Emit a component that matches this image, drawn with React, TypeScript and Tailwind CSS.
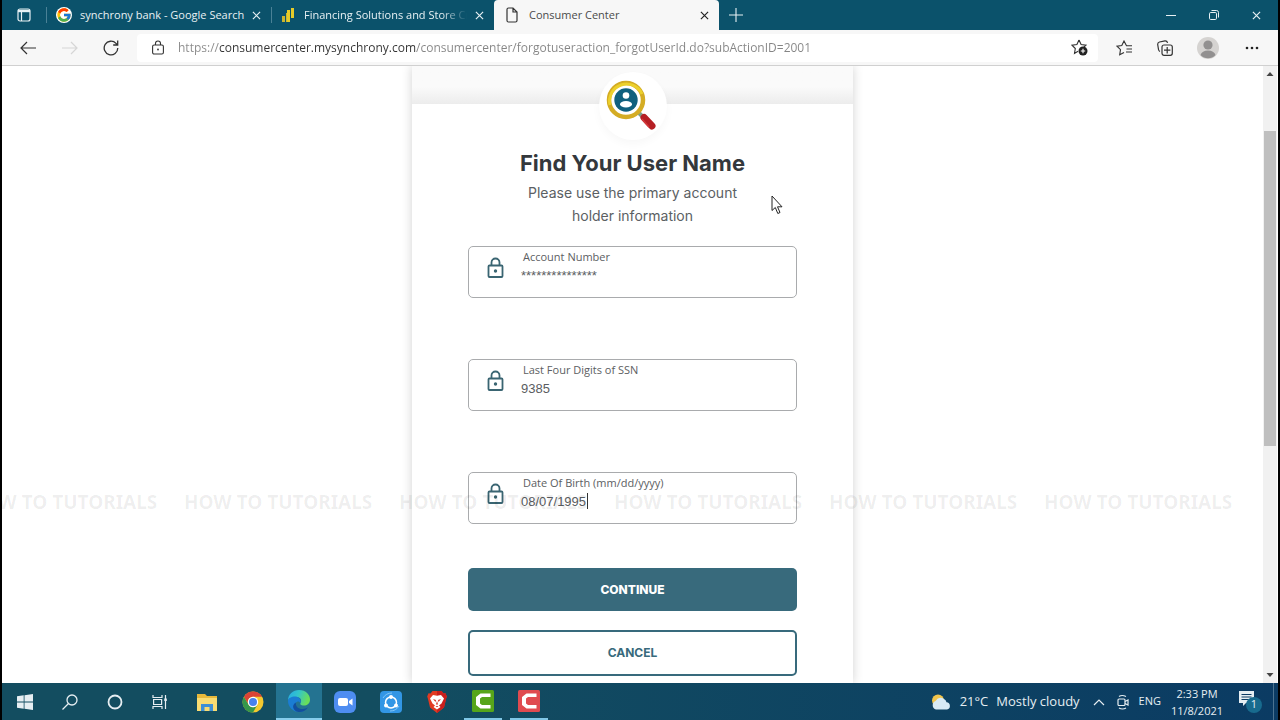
import React, { useState } from 'react';
import { FcGoogle } from 'react-icons/fc';

interface TextFieldProps {
  id: string;
  label: string;
  value: string;
  onChange: (value: string) => void;
  caret?: boolean;
}

function CloseIcon({ className = '' }: { className?: string }) {
  return (
    <svg viewBox="0 0 10 10" className={`size-[9px] ${className}`} fill="none" stroke="currentColor" strokeWidth="1.3">
      <path d="M1 1l8 8M9 1L1 9" />
    </svg>
  );
}

function LockIcon() {
  return (
    <svg viewBox="0 0 18 22" className="w-[18px] h-[22px] text-[#3a6572]" fill="none" stroke="currentColor" strokeWidth="1.8">
      <rect x="1.5" y="8.5" width="14" height="11.5" rx="1" />
      <path d="M4.500 8.500V5.500a4 4 0 0 1 8 0V8.500" />
      <circle cx="8.500" cy="14" r="1.700" fill="currentColor" stroke="none" />
    </svg>
  );
}

function FindUserIcon() {
  return (
    <svg viewBox="2 1 54 54" className="size-[54px]">
      <path d="M34 34l5 5" stroke="#7d9f8b" strokeWidth="4" />
      <path d="M40 39.500l8 8.500" stroke="#b51f24" strokeWidth="7" strokeLinecap="round" />
      <path d="M38 41l7 8" stroke="#d4383a" strokeWidth="1.500" />
      <circle cx="22" cy="22" r="17" fill="#fff" stroke="#d4ac24" strokeWidth="4.500" />
      <path d="M6 27A17 17 0 0 1 38 16" stroke="#ecd02c" strokeWidth="3" fill="none" />
      <circle cx="22" cy="22" r="11.700" fill="#10607e" />
      <circle cx="22" cy="17.500" r="3.300" fill="#fff" />
      <ellipse cx="22" cy="26.300" rx="6" ry="3.200" fill="#fff" />
    </svg>
  );
}

function TextField({ id, label, value, onChange, caret = false }: TextFieldProps) {
  return (
    <div className="flex h-[52px] rounded-[5px] border border-[#a9abad] bg-white pl-[18px] pt-[10px]">
      <LockIcon />
      <div className="relative ml-4 -mt-2 flex flex-1 flex-col">
        <label htmlFor={id} className="pl-[2px] text-[11px] leading-[16px] text-[#5c6062]">
          {label}
        </label>
        <input
          id={id}
          type="text"
          value={value}
          onChange={(e) => onChange(e.target.value)}
          className="h-5 w-full bg-transparent font-['Liberation_Sans',Arial,sans-serif] text-[13px] text-[#5a5d5f] outline-none"
        />
        {caret && <span className="absolute left-[66px] top-[18px] h-4 w-px bg-[#333]" />}
      </div>
    </div>
  );
}

function TabBar() {
  return (
    <div className="flex h-[30px] shrink-0 items-center bg-[#0b526b] text-[11px] text-[#e8f1f4]">
      <button aria-label="Tab actions" className="flex w-11 justify-center">
        <svg viewBox="0 0 14 14" className="size-[14px]" fill="none" stroke="currentColor" strokeWidth="1.2">
          <rect x="1" y="1" width="12" height="12" rx="2" />
          <path d="M1 3h12" strokeWidth="2.4" />
          <path d="M4.500 4v9" />
        </svg>
      </button>
      <div className="flex w-[225px] items-center border-l border-[#4a8196] pl-[9px] pr-[10px]">
        <FcGoogle className="size-4 shrink-0 rounded-full bg-white" />
        <span className="ml-2 flex-1 whitespace-nowrap">synchrony bank - Google Search</span>
        <button aria-label="Close tab">
          <CloseIcon />
        </button>
      </div>
      <div className="flex w-[223px] items-center border-l border-[#4a8196] pl-[10px] pr-[10px]">
        <svg viewBox="0 0 14 16" className="h-4 w-[14px] shrink-0">
          <path d="M0 9h3v6H0zM4 6h3v9H4z" fill="#c9b52f" />
          <path d="M5 3h3v12H5zM9 1h3v10H9z" fill="#e5cb29" />
        </svg>
        <span className="ml-2 flex-1 overflow-hidden whitespace-nowrap [mask-image:linear-gradient(to_right,black_84%,transparent)]">
          Financing Solutions and Store Cr
        </span>
        <button aria-label="Close tab" className="ml-2">
          <CloseIcon />
        </button>
      </div>
      <div className="flex h-full w-[225px] items-center rounded-t-[4px] bg-[#f7f7f7] pl-3 pr-[10px] text-[#4b4b4b]">
        <svg viewBox="0 0 12 16" className="h-4 w-3 shrink-0" fill="none" stroke="#333" strokeWidth="1.2">
          <path d="M1 2.500Q1 1 2.500 1H7l4 4v8.500Q11 15 9.500 15h-7Q1 15 1 13.500zM7 1v4h4" />
        </svg>
        <span className="ml-[11px] flex-1 truncate">Consumer Center</span>
        <button aria-label="Close tab">
          <CloseIcon className="text-[#222]" />
        </button>
      </div>
      <button aria-label="New tab" className="ml-[10px]">
        <svg viewBox="0 0 14 14" className="size-[14px]" fill="none" stroke="currentColor" strokeWidth="1.1">
          <path d="M7 0v14M0 7h14" />
        </svg>
      </button>
      <div className="ml-auto flex">
        <button aria-label="Minimize" className="flex w-[43px] items-center justify-center">
          <svg viewBox="0 0 10 10" className="size-[10px]" stroke="currentColor">
            <path d="M0 5.500h10" />
          </svg>
        </button>
        <button aria-label="Restore" className="flex w-[43px] items-center justify-center">
          <svg viewBox="0 0 10 10" className="size-[10px]" fill="none" stroke="currentColor">
            <rect x="0.500" y="2.500" width="7" height="7" rx="1.200" />
            <path d="M2.500 .5H7.500Q9.500 .5 9.500 2.500V7.500" />
          </svg>
        </button>
        <button aria-label="Close" className="flex w-[43px] items-center justify-center">
          <CloseIcon />
        </button>
      </div>
    </div>
  );
}

function Toolbar() {
  const [url, setUrl] = useState(
    'https://consumercenter.mysynchrony.com/consumercenter/forgotuseraction_forgotUserId.do?subActionID=2001'
  );

  return (
    <div className="flex h-9 shrink-0 items-center border-b border-[#d0d0d0] bg-[#f7f7f7] text-[#333]">
      <button aria-label="Back" className="ml-[18px]">
        <svg viewBox="0 0 16 14" className="h-[14px] w-4" fill="none" stroke="currentColor" strokeWidth="1.2">
          <path d="M16 7H1M7 1L1 7l6 6" />
        </svg>
      </button>
      <button aria-label="Forward" className="ml-[26px] text-[#d6d6d6]">
        <svg viewBox="0 0 16 14" className="h-[14px] w-4" fill="none" stroke="currentColor" strokeWidth="1.2">
          <path d="M0 7h15M9 1l6 6-6 6" />
        </svg>
      </button>
      <button aria-label="Refresh" className="ml-[25px]">
        <svg viewBox="0 0 16 16" className="size-4" fill="none" stroke="currentColor" strokeWidth="1.3">
          <path d="M14.800 8A6.800 6.800 0 1 1 13 3.400L14.500 5M14.700 .5V5H10.200" />
        </svg>
      </button>
      <div className="ml-[18px] flex h-7 flex-1 items-center rounded-[4px] bg-white pl-[15px] pr-[10px]">
        <svg viewBox="0 0 12 15" className="h-[15px] w-3" fill="none" stroke="currentColor" strokeWidth="1.1">
          <rect x=".6" y="5" width="10.800" height="9" rx="1.500" />
          <path d="M3.500 5V3.500a2.500 2.500 0 0 1 5 0V5" />
          <circle cx="6" cy="9.500" r=".9" fill="currentColor" stroke="none" />
        </svg>
        <input
          type="text"
          aria-label="Address"
          value={url}
          onChange={(e) => setUrl(e.target.value)}
          className="ml-[14px] flex-1 bg-[linear-gradient(to_right,#8a8a8a_41px,#333_41px,#333_238px,#858585_238px)] bg-clip-text text-[12px] text-transparent outline-none"
        />
        <button aria-label="Add to favorites">
          <svg viewBox="0 0 17 17" className="size-[17px]" fill="none" stroke="currentColor" strokeWidth="1.1">
            <path d="M8 1l2.100 4.500 4.900.7-3.600 3.500M7 12.300L3.500 14.500l.8-5L1 6.200l4.900-.7L8 1" />
            <circle cx="12" cy="12" r="4.500" fill="#222" stroke="none" />
            <path d="M12 9.800v4.400M9.800 12h4.400" stroke="#fff" />
          </svg>
        </button>
      </div>
      <div className="ml-[18px] mr-[19px] flex items-center">
        <button aria-label="Favorites">
          <svg viewBox="0 0 17 16" className="h-4 w-[17px]" fill="none" stroke="currentColor" strokeWidth="1.1">
            <path d="M16 5.800h-5.500L8 1 5.800 5.500 1 6.200l3.500 3.500-.8 5L8 12.400M10.500 9h5.500M10 12h6" />
          </svg>
        </button>
        <button aria-label="Collections" className="ml-6">
          <svg viewBox="0 0 16 16" className="size-4" fill="none" stroke="currentColor" strokeWidth="1.2">
            <rect x="5" y="5" width="10.300" height="10.300" rx="2" />
            <path d="M10.200 7v6.400M7 10.200h6.400M3 11.500Q1.800 11 1.500 9.500L.7 4.500Q.6 2.500 2.500 2L8 .8Q10 .6 10.600 2.800" />
          </svg>
        </button>
        <button aria-label="Profile" className="ml-6">
          <svg viewBox="0 0 22 22" className="size-[22px]">
            <circle cx="11" cy="11" r="11" fill="#d5d3d1" />
            <circle cx="11" cy="8" r="4.600" fill="#929090" />
            <path d="M3.500 18Q5 13.500 11 13.500T18.500 18Q15.500 21.300 11 21.300T3.500 18z" fill="#929090" />
          </svg>
        </button>
        <button aria-label="Settings and more" className="ml-[26px]">
          <svg viewBox="0 0 14 4" className="h-1 w-[14px]" fill="#222">
            <circle cx="2" cy="2" r="1.300" />
            <circle cx="7" cy="2" r="1.300" />
            <circle cx="12" cy="2" r="1.300" />
          </svg>
        </button>
      </div>
    </div>
  );
}

function FindUserForm() {
  const [account, setAccount] = useState('***************');
  const [ssn, setSsn] = useState('9385');
  const [birth, setBirth] = useState('08/07/1995');

  return (
    <main className="mx-auto w-full max-w-[441px] bg-white shadow-[0_0_10px_rgba(0,0,0,0.18)]">
      <div className="flex h-[38px] justify-center bg-linear-to-b from-[#fafafa] from-55% to-[#ececec]">
        <div className="mt-[6px] flex size-[68px] shrink-0 items-center justify-center rounded-full bg-white shadow-[0_4px_8px_rgba(0,0,0,0.03)]">
          <FindUserIcon />
        </div>
      </div>
      <form className="flex flex-col px-14 pt-[46px]" onSubmit={(e) => e.preventDefault()}>
        <h1 className="text-center font-['Inter',sans-serif] text-[22px] font-bold leading-[26px] text-[#34383c]">
          Find Your User Name
        </h1>
        <p className="mx-auto mt-[5px] max-w-[240px] text-center font-['Inter',sans-serif] text-[14px] leading-[23px] text-[#5b6063]">
          Please use the primary account holder information
        </p>
        <div className="mt-[19px] flex flex-col gap-[61px]">
          <TextField id="account" label="Account Number" value={account} onChange={setAccount} />
          <TextField id="ssn" label="Last Four Digits of SSN" value={ssn} onChange={setSsn} />
          <TextField id="birth" label="Date Of Birth (mm/dd/yyyy)" value={birth} onChange={setBirth} caret />
        </div>
        <button
          type="submit"
          className="mt-11 h-[43px] rounded-[5px] bg-[#386a7c] font-['Inter',sans-serif] text-[12px] font-extrabold text-white"
        >
          CONTINUE
        </button>
        <button
          type="button"
          className="mt-[19px] h-[46px] rounded-[5px] border-2 border-[#386a7c] bg-white font-['Inter',sans-serif] text-[12px] font-bold text-[#386a7c]"
        >
          CANCEL
        </button>
      </form>
    </main>
  );
}

function Scrollbar() {
  return (
    <div className="mr-px flex w-[14px] shrink-0 flex-col items-center bg-[#f1f1f1] py-[6px]">
      <svg viewBox="0 0 8 4" className="h-1 w-2" fill="#444">
        <path d="M4 0l3.500 4h-7z" />
      </svg>
      <div className="mt-[55px] h-[315px] w-3 bg-[#bfbfbf]" />
      <svg viewBox="0 0 8 4" className="mt-auto h-1 w-2" fill="#444">
        <path d="M4 4L.5 0h7z" />
      </svg>
    </div>
  );
}

function Watermark() {
  return (
    <div
      aria-hidden="true"
      className="pointer-events-none absolute inset-x-0 top-[424px] -ml-[33px] flex gap-[26px] overflow-hidden whitespace-nowrap font-['Noto_Sans',sans-serif] text-[19px] font-bold leading-6 text-black/7"
    >
      {[0, 1, 2, 3, 4, 5].map((i) => (
        <span key={i} className="w-[189px] shrink-0">
          HOW TO TUTORIALS
        </span>
      ))}
    </div>
  );
}

const apps = [
  {
    name: 'File Explorer',
    cell: 'w-[46px]',
    icon: (
      <>
        <path d="M2 4h8l2 2h10v15H2z" fill="#e8b93b" />
        <path d="M2 8h20v13H2z" fill="#f9dc72" />
        <path d="M6 14h12v7h-3.500v-4h-5v4H6z" fill="#3d8fd6" />
      </>
    )
  },
  {
    name: 'Google Chrome',
    cell: 'w-[46px]',
    icon: (
      <>
        <circle cx="12" cy="12" r="10.500" fill="#f4c92f" />
        <path d="M2.900 6.750A10.500 10.500 0 0 1 21.100 6.750H12A5.250 5.250 0 0 0 7.450 14.600z" fill="#d94336" />
        <path d="M2.900 6.750A10.500 10.500 0 0 0 12 22.500l4.550-7.900A5.250 5.250 0 0 1 7.450 14.600z" fill="#36974b" />
        <circle cx="12" cy="12" r="5.200" fill="#fff" />
        <circle cx="12" cy="12" r="4" fill="#4681ed" />
      </>
    )
  },
  {
    name: 'Microsoft Edge',
    cell: 'w-[46px] bg-[#247391] border-b-2 border-[#86cdec]',
    icon: (
      <>
        <defs>
          <linearGradient id="edge-top" x1="0" y1="0" x2="1" y2="0.3">
            <stop offset="0" stopColor="#25a9e8" />
            <stop offset="0.5" stopColor="#33c5ca" />
            <stop offset="1" stopColor="#69de59" />
          </linearGradient>
        </defs>
        <path d="M1 12C1 5 6 1 12 1c7 0 11 5 11 9.500 0 4-3 6-6 6-3.500 0-4-1.500-3.500-2.500 1.500-2 .5-6-4-6C5 8 1 10 1 12z" fill="url(#edge-top)" />
        <path d="M1 12c0-3 3.500-4.500 7-4.500 4 0 6.500 3 5.500 6.500-1.500-2.500-5-2-5 1.500 0 4 4 7 8 7C8 25 1 19 1 12z" fill="#1b7dd3" />
        <path d="M9 13.500c-1 4 3 7 7 6.500 2 0 4-1 5-2-2 4-6 5.500-9.500 5C6 22 4 16 9 13.500z" fill="#124f9d" />
      </>
    )
  },
  {
    name: 'Zoom',
    cell: 'w-[46px]',
    icon: (
      <>
        <rect x="1" y="1" width="22" height="22" rx="6" fill="#4e8df1" />
        <rect x="5" y="8" width="10" height="8" rx="2" fill="#fff" />
        <path d="M16 11l3.500-2.500v7L16 13z" fill="#fff" />
      </>
    )
  },
  {
    name: 'SHAREit',
    cell: 'w-[46px]',
    icon: (
      <>
        <rect x="1" y="1" width="22" height="22" rx="4" fill="#3296e5" />
        <circle cx="12" cy="12.500" r="5.500" fill="none" stroke="#fff" strokeWidth="1.500" />
        <path d="M4 8Q7 3 13 3M20 16q-3 5-9 5" fill="none" stroke="#85c6f5" />
        <circle cx="12" cy="7" r="2" fill="#fff" />
        <circle cx="7" cy="15.500" r="2" fill="#fff" />
        <circle cx="17" cy="15.500" r="2" fill="#fff" />
      </>
    )
  },
  {
    name: 'Brave',
    cell: 'w-[46px]',
    icon: (
      <>
        <path d="M7.500 1h9l2 2.500 2-.2 1.300 3.200-.8 2.500L19 17.500 12 23 5 17.500 3 9l-.8-2.500L3.500 3.300l2 .2z" fill="#e23a22" />
        <path d="M12 1h4.500l2 2.500 2-.2 1.300 3.200-.8 2.500L19 17.500 12 23z" fill="#c91f1d" />
        <path d="M8 5l4 .8L16 5l3 3.500-2.500 5-2.500 2 1.500 1.500L12 19.500 8.500 17l1.500-1.500-2.500-2L5 8.500z" fill="#fff" />
        <path d="M8 9l3 1-.5 2zM16 9l-3 1 .5 2zM12 11l1 3.500h-2zM10.500 16h3L12 17.200z" fill="#d62f20" />
      </>
    )
  },
  {
    name: 'Camtasia',
    cell: 'w-[38px] mx-1 border-b-2 border-[#80c7e6]',
    icon: (
      <>
        <rect x="1" y="1" width="22" height="22" rx="1.500" fill="#56a51a" />
        <path d="M19.500 4.500h-10L5 8v8l4.500 3.500h10v-3.500h-8.500l-2-1.500V9.500l2-1.500h8.500z" fill="#fff" />
      </>
    )
  },
  {
    name: 'Camtasia Recorder',
    cell: 'w-[38px] mx-1 border-b-2 border-[#80c7e6]',
    icon: (
      <>
        <rect x="1" y="1" width="22" height="22" rx="1.500" fill="#e04b50" />
        <path d="M19.500 4.500h-10L5 8v8l4.500 3.500h10v-3.500h-8.500l-2-1.500V9.500l2-1.500h8.500z" fill="#fff" />
      </>
    )
  }
];

function Taskbar() {
  return (
    <footer className="flex h-[37px] shrink-0 bg-linear-to-r from-[#134d60] from-30% to-[#0b3b63] text-[#e6eef2]">
      <button aria-label="Start" className="flex w-[45px] items-center justify-center">
        <svg viewBox="0 0 16 16" className="size-4" fill="currentColor">
          <path d="M0 2.300L6.700 1.300v6.300H0zM7.500 1.200L16 0v7.600H7.500zM0 8.400h6.700v6.300L0 13.700zM7.500 8.400H16V16l-8.500-1.200z" />
        </svg>
      </button>
      <button aria-label="Search" className="flex w-[45px] items-center justify-center">
        <svg viewBox="0 0 16 16" className="size-4" fill="none" stroke="currentColor" strokeWidth="1.3">
          <circle cx="10" cy="6" r="5" />
          <path d="M6.500 9.500L.5 15.500" />
        </svg>
      </button>
      <button aria-label="Cortana" className="flex w-[45px] items-center justify-center">
        <svg viewBox="0 0 16 16" className="size-4" fill="none" stroke="currentColor" strokeWidth="1.800">
          <circle cx="8" cy="8" r="6.500" />
        </svg>
      </button>
      <button aria-label="Task view" className="flex w-[45px] items-center justify-center">
        <svg viewBox="0 0 16 16" className="size-4" fill="none" stroke="currentColor" strokeWidth="1.200">
          <path d="M1 1v2.500h9V1M1 15v-2.500h9V15M1.600 5.500h8v5h-8zM13.500 1v14" />
          <path d="M12.300 4.500h2.500v2.500h-2.500z" fill="currentColor" stroke="none" />
        </svg>
      </button>
      <div className="ml-[2px] flex">
        {apps.map((app) => (
          <button key={app.name} aria-label={app.name} className={`flex items-center justify-center ${app.cell}`}>
            <svg viewBox="0 0 24 24" className="size-6">
              {app.icon}
            </svg>
          </button>
        ))}
      </div>
      <div className="ml-auto flex items-center">
        <svg viewBox="0 0 20 16" className="h-4 w-5">
          <circle cx="7" cy="6.500" r="6" fill="#f0c44c" />
          <path d="M5 15.500a4.500 4.500 0 0 1-.5-8.500Q8 1.500 13 5q2 1 2.500 3.200a3.700 3.700 0 0 1 .5 7.300z" fill="#d8ebf6" />
        </svg>
        <span className="ml-[9px] text-[13px]">21°C</span>
        <span className="ml-2 text-[13px]">Mostly cloudy</span>
        <button aria-label="Show hidden icons" className="ml-[13px]">
          <svg viewBox="0 0 12 8" className="h-2 w-3" fill="none" stroke="currentColor" strokeWidth="1.200">
            <path d="M1 7l5-5 5 5" />
          </svg>
        </button>
        <svg viewBox="0 0 12 16" className="ml-3 h-4 w-3" fill="none" stroke="currentColor" strokeWidth="1.200">
          <rect x="1" y="5" width="7" height="6.500" rx="1" />
          <path d="M8 7.500L11 6v5L8 9.500M2 2.500Q5 .5 9 2.500M2 14q3.500 2 7 0" />
        </svg>
        <span className="ml-[10px] text-[11px]">ENG</span>
        <div className="ml-2 flex w-14 flex-col items-center whitespace-nowrap text-[11px] leading-[17px]">
          <span>2:33 PM</span>
          <span>11/8/2021</span>
        </div>
        <button aria-label="Notifications" className="ml-[14px] flex">
          <svg viewBox="0 0 16 16" className="size-4" fill="currentColor">
            <path d="M0 0h15v12H7l-3 3v-3H0z" />
            <path d="M2.500 3.500h10M2.500 6h10M2.500 8.500h7" stroke="#0b3b63" />
          </svg>
          <span className="-ml-[9px] mt-[6px] flex size-4 items-center justify-center rounded-full bg-[#186b8e] text-[11px]">
            1
          </span>
        </button>
        <div className="ml-[11px] mr-1 h-[37px] w-px bg-[#4b7390]" />
      </div>
    </footer>
  );
}

export default function App() {
  return (
    <div className="flex h-screen flex-col overflow-hidden border-x-2 border-black bg-white font-['Open_Sans','Noto_Sans',sans-serif]">
      <TabBar />
      <Toolbar />
      {/* Page content */}
      <div className="relative flex min-h-0 flex-1 overflow-hidden">
        <div className="flex flex-1">
          <FindUserForm />
        </div>
        <Scrollbar />
        <Watermark />
        <svg viewBox="0 0 12 20" className="absolute left-[769px] top-[129px] h-5 w-3" fill="#fff" stroke="#222">
          <path d="M1 1v14.500l3.300-3 2.500 6 2.200-1-2.500-5.700H11z" />
        </svg>
      </div>
      <Taskbar />
    </div>
  );
}
